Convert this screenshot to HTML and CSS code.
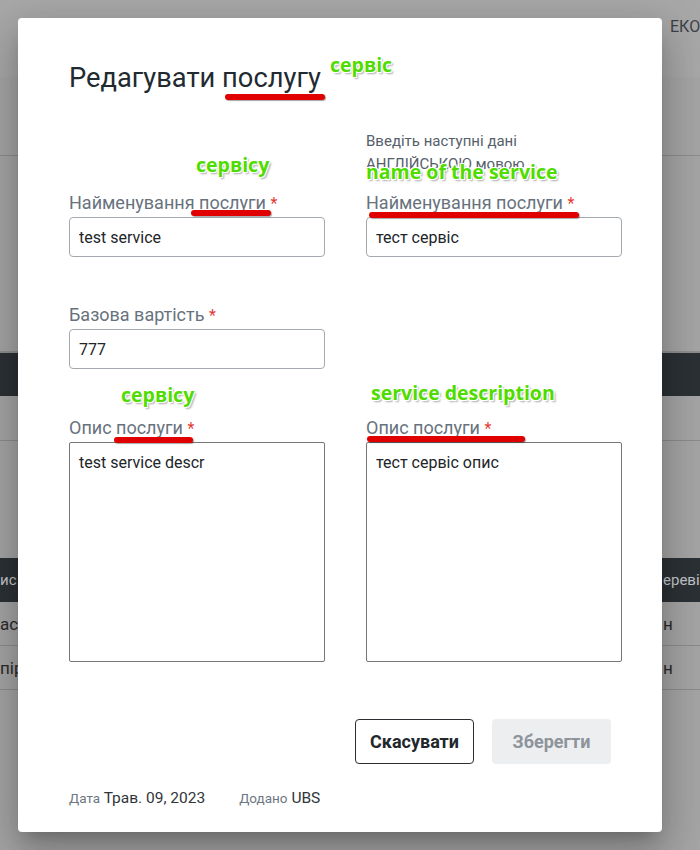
FILE: index.html
```html
<!DOCTYPE html>
<html lang="uk">
<head>
<meta charset="utf-8">
<title>Редагувати послугу</title>
<link rel="stylesheet" href="styles.css">
</head>
<body>
<div class="page">
  <header class="topbar"><span class="brand">ЕКО</span></header>
  <div class="subbar"></div>
  <div class="gap-a"></div>
  <div class="darkbar"></div>
  <div class="strip"></div>
  <div class="gap-b"></div>
  <div class="trow thead"><span>ис</span><span>еревіз</span></div>
  <div class="trow"><span>ас</span><span>н</span></div>
  <div class="trow"><span>пір</span><span>н</span></div>
</div>

<div class="modal">
  <h2 class="title">Редагувати послугу</h2>
  <div class="form">
    <div class="field">
      <label class="label">Найменування послуги <span class="req">*</span></label>
      <input class="input" type="text" value="test service">
    </div>
    <div class="field">
      <p class="info">Введіть наступні дані<br>АНГЛІЙСЬКОЮ мовою</p>
      <label class="label">Найменування послуги <span class="req">*</span></label>
      <input class="input" type="text" value="тест сервіс">
    </div>
    <div class="field">
      <label class="label">Базова вартість <span class="req">*</span></label>
      <input class="input" type="text" value="777">
    </div>
    <div class="field"></div>
    <div class="field field-desc">
      <label class="label">Опис послуги <span class="req">*</span></label>
      <textarea class="textarea">test service descr</textarea>
    </div>
    <div class="field field-desc">
      <label class="label">Опис послуги <span class="req">*</span></label>
      <textarea class="textarea">тест сервіс опис</textarea>
    </div>
  </div>
  <div class="actions">
    <button class="btn btn-cancel" type="button">Скасувати</button>
    <button class="btn btn-save" type="button">Зберегти</button>
  </div>
  <div class="meta">
    <span><span class="meta-key">Дата</span> Трав. 09, 2023</span>
    <span><span class="meta-key">Додано</span> UBS</span>
  </div>
</div>

<div class="note n1">сервіс</div>
<div class="note n2">сервісу</div>
<div class="note n3">name of the service</div>
<div class="note n4">сервісу</div>
<div class="note n5">service description</div>
<div class="mark m1"></div>
<div class="mark m2"></div>
<div class="mark m3"></div>
<div class="mark m4"></div>
<div class="mark m5"></div>
</body>
</html>
```
FILE: styles.css
```css
html, body {
  margin: 0;
  padding: 0;
}
body {
  position: relative;
  width: 700px;
  height: 850px;
  overflow: hidden;
  background: #a5a5a5;
  font-family: Roboto, "Liberation Sans", Arial, sans-serif;
}

/* background page under the overlay */
.page {
  width: 700px;
}
.topbar {
  height: 77px;
  background: #a8a8a8;
}
.brand {
  display: block;
  padding-left: 670px;
  padding-top: 17px;
  font-size: 16px;
  line-height: 20px;
  color: #3d4247;
  white-space: nowrap;
}
.subbar {
  height: 78px;
  border-bottom: 1px solid #8d8d8d;
}
.gap-a {
  height: 195px;
}
.darkbar {
  height: 43px;
  border-top: 2px solid #8f8f8f;
  background: #2c3135;
}
.strip {
  height: 44px;
  border-bottom: 1px solid #8c8c8c;
}
.gap-b {
  height: 117px;
}
.trow {
  display: grid;
  grid-template-columns: 663px 1fr;
  height: 43px;
  align-items: center;
  border-bottom: 1px solid #8c8c8c;
  font-size: 17px;
  color: #2b2b2b;
  white-space: nowrap;
  overflow: hidden;
}
.thead {
  height: 44px;
  background: #2c3135;
  color: #c4c7ca;
  font-size: 15px;
  border-bottom: none;
}

/* dialog */
.modal {
  position: absolute;
  left: 18px;
  top: 18px;
  width: 644px;
  height: 814px;
  box-sizing: border-box;
  padding: 43px 40px 0 51px;
  background: #fff;
  border-radius: 4px;
  box-shadow: 0 11px 15px -7px rgba(0,0,0,.2), 0 24px 38px 3px rgba(0,0,0,.14), 0 9px 46px 8px rgba(0,0,0,.12);
}
.title {
  margin: 0;
  font-size: 27.3px;
  line-height: 34px;
  font-weight: 400;
  color: #222a31;
}
.form {
  display: grid;
  grid-template-columns: 256px 256px;
  column-gap: 41px;
  row-gap: 47px;
  margin-top: 35px;
}
.field {
  display: flex;
  flex-direction: column;
  justify-content: flex-end;
}
.field-desc {
  margin-top: 1px;
}
.info {
  margin: 0 0 16px;
  font-size: 15px;
  line-height: 23px;
  color: #56606a;
}
.label {
  height: 22px;
  font-size: 18px;
  line-height: 22px;
  color: #67727d;
  margin-bottom: 3px;
  white-space: nowrap;
}
.req {
  color: #e53935;
  font-size: 16px;
  line-height: 0;
}
.input {
  height: 40px;
  box-sizing: border-box;
  border: 1px solid #a3a9af;
  border-radius: 4px;
  padding: 0 9px;
  font-family: Roboto, "Liberation Sans", Arial, sans-serif;
  font-size: 16px;
  color: #212529;
  background: #fff;
  outline: none;
}
.textarea {
  height: 220px;
  box-sizing: border-box;
  border: 1px solid #777;
  border-radius: 2px;
  padding: 10px 9px;
  font-family: Roboto, "Liberation Sans", Arial, sans-serif;
  font-size: 16px;
  line-height: 19px;
  color: #212529;
  resize: none;
  outline: none;
}
.actions {
  display: flex;
  justify-content: flex-end;
  gap: 18px;
  margin-top: 57px;
  padding-right: 11px;
}
.btn {
  width: 119px;
  height: 45px;
  box-sizing: border-box;
  border-radius: 4px;
  font-family: Roboto, "Liberation Sans", Arial, sans-serif;
  font-size: 18px;
  font-weight: 700;
  padding: 0;
}
.btn-cancel {
  background: #fff;
  border: 1px solid #2b2f33;
  color: #22272c;
}
.btn-save {
  background: #eceef0;
  border: none;
  color: #8e949b;
}
.meta {
  display: flex;
  gap: 34px;
  margin-top: 25px;
  font-size: 15.5px;
  line-height: 19px;
  color: #30353a;
}
.meta-key {
  font-size: 13.5px;
  color: #6d7782;
}

/* screenshot annotations */
.note {
  position: absolute;
  font-family: "Open Sans", "DejaVu Sans", sans-serif;
  font-weight: 700;
  font-size: 19.5px;
  line-height: 18px;
  color: #50dc00;
  white-space: nowrap;
  text-shadow: -1px -1px 0 #fff, 1px -1px 0 #fff, -1px 1px 0 #fff, 1px 1px 0 #fff, 2px 2px 2px rgba(0,0,0,.35);
}
.n1 { left: 330px; top: 56px; }
.n2 { left: 196px; top: 156px; }
.n3 { left: 366px; top: 163px; }
.n4 { left: 121px; top: 386px; }
.n5 { left: 371px; top: 384px; }
.mark {
  position: absolute;
  height: 6px;
  background: #e10000;
  border-radius: 3px;
  box-shadow: 1px 1px 1px rgba(0,0,0,.35);
}
.m1 { left: 225px; top: 94px; width: 100px; }
.m2 { left: 191px; top: 210px; width: 80px; }
.m3 { left: 369px; top: 212px; width: 210px; }
.m4 { left: 114px; top: 437px; width: 79px; }
.m5 { left: 367px; top: 436px; width: 158px; }
```
